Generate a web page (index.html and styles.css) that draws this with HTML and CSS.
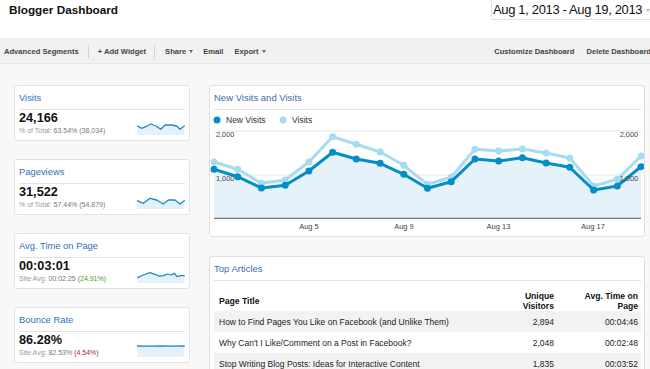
FILE: index.html
```html
<!DOCTYPE html>
<html>
<head>
<meta charset="utf-8">
<link rel="stylesheet" href="styles.css">
</head>
<body>
<div class="header">
  <div class="title">Blogger Dashboard</div>
  <div class="date">Aug 1, 2013 - Aug 19, 2013<span class="date-arrow"></span></div>
</div>
<div class="toolbar">
  <span class="tb-item">Advanced Segments</span>
  <span class="tb-sep sep1"></span>
  <span class="tb-item">+ Add Widget</span>
  <span class="tb-sep sep2"></span>
  <span class="tb-item">Share</span><span class="caret"></span>
  <span class="tb-item email">Email</span>
  <span class="tb-item export">Export</span><span class="caret"></span>
  <span class="tb-item right">Customize Dashboard</span>
  <span class="tb-item delete">Delete Dashboard</span>
</div>
<div class="main">
  <div class="left">
    <div class="card">
      <div class="card-title">Visits</div>
      <div class="card-body">
        <div class="card-info">
          <div class="value">24,166</div>
          <div class="sub">% of Total: <span class="subv">63.54% (38,034)</span></div>
        </div>
        <svg class="spark" width="48" height="15" viewBox="0 0 48 15">
          <polygon class="spark-fill" points="0.3,5 4.7,7.3 8.7,5.7 13.7,3 19,5 23.7,8.3 28,4 34.7,4 39.7,5 43,8.3 47.3,5 47.3,14 0.3,14"/>
          <polyline class="spark-line" points="0.3,5 4.7,7.3 8.7,5.7 13.7,3 19,5 23.7,8.3 28,4 34.7,4 39.7,5 43,8.3 47.3,5"/>
        </svg>
      </div>
    </div>
    <div class="card">
      <div class="card-title">Pageviews</div>
      <div class="card-body">
        <div class="card-info">
          <div class="value">31,522</div>
          <div class="sub">% of Total: <span class="subv">57.44% (54,879)</span></div>
        </div>
        <svg class="spark" width="48" height="15" viewBox="0 0 48 15">
          <polygon class="spark-fill" points="0.3,5.7 6.3,8.3 13,3.3 19.7,5 26.3,9 31.3,5 38,5 43,9 47.3,5.7 47.3,14 0.3,14"/>
          <polyline class="spark-line" points="0.3,5.7 6.3,8.3 13,3.3 19.7,5 26.3,9 31.3,5 38,5 43,9 47.3,5.7"/>
        </svg>
      </div>
    </div>
    <div class="card">
      <div class="card-title">Avg. Time on Page</div>
      <div class="card-body">
        <div class="card-info">
          <div class="value">00:03:01</div>
          <div class="sub">Site Avg: <span class="subv">00:02:25</span> <span class="good">(24.91%)</span></div>
        </div>
        <svg class="spark" width="48" height="15" viewBox="0 0 48 15">
          <polygon class="spark-fill" points="0.3,8.7 6.3,6 13,3.7 18,5.3 22.3,7 26.3,6.7 30.3,5 33.7,6 37.3,4.3 40.3,7.7 43.7,6.7 47.3,6.7 47.3,14 0.3,14"/>
          <polyline class="spark-line" points="0.3,8.7 6.3,6 13,3.7 18,5.3 22.3,7 26.3,6.7 30.3,5 33.7,6 37.3,4.3 40.3,7.7 43.7,6.7 47.3,6.7"/>
        </svg>
      </div>
    </div>
    <div class="card">
      <div class="card-title">Bounce Rate</div>
      <div class="card-body">
        <div class="card-info">
          <div class="value">86.28%</div>
          <div class="sub">Site Avg: <span class="subv">82.53%</span> <span class="bad">(4.54%)</span></div>
        </div>
        <svg class="spark" width="48" height="15" viewBox="0 0 48 15">
          <polygon class="spark-fill" points="0.3,3 47.3,3 47.3,14 0.3,14"/>
          <polyline class="spark-line" points="0.3,3 12,3.2 24,2.9 36,3.1 47.3,3"/>
        </svg>
      </div>
    </div>
  </div>
  <div class="right-col">
    <div class="panel">
      <div class="panel-title">New Visits and Visits</div>
      <svg class="chart" width="434" height="126" viewBox="0 0 434 126">
        <circle cx="7" cy="10" r="3.5" fill="#058dc7"/>
        <text x="16" y="13.3" class="legend">New Visits</text>
        <circle cx="73" cy="10" r="3.5" fill="#a6dcf2"/>
        <text x="82" y="13.3" class="legend">Visits</text>
        <line x1="4" y1="21" x2="431" y2="21" class="grid"/>
        <line x1="4" y1="65" x2="431" y2="65" class="grid"/>
        <polygon class="area" points="4,59.3 27.7,66.7 51.4,78 75.2,75.3 98.9,61 122.6,42.3 146.3,49 170.1,53.3 193.8,64.3 217.5,78.3 241.2,71.7 264.9,49 288.7,51 312.4,47.7 336.1,53 359.8,57.3 383.6,80 407.3,76 431,56.7 431,108 4,108"/>
        <line x1="4" y1="108.3" x2="431" y2="108.3" class="axis"/>
        <text x="6" y="27" class="ylab">2,000</text>
        <text x="6" y="71" class="ylab">1,000</text>
        <polyline class="line-light" points="4,52 27.7,59.3 51.4,73.3 75.2,70 98.9,52 122.6,26.7 146.3,34.3 170.1,42 193.8,55.3 217.5,74.3 241.2,67.3 264.9,39.3 288.7,41 312.4,39 336.1,43 359.8,48 383.6,76 407.3,69.3 431,46"/>
        <g fill="#a6dcf2">
          <circle cx="4" cy="52" r="3.5"/><circle cx="27.7" cy="59.3" r="3.5"/><circle cx="51.4" cy="73.3" r="3.5"/><circle cx="75.2" cy="70" r="3.5"/><circle cx="98.9" cy="52" r="3.5"/><circle cx="122.6" cy="26.7" r="3.5"/><circle cx="146.3" cy="34.3" r="3.5"/><circle cx="170.1" cy="42" r="3.5"/><circle cx="193.8" cy="55.3" r="3.5"/><circle cx="217.5" cy="74.3" r="3.5"/><circle cx="241.2" cy="67.3" r="3.5"/><circle cx="264.9" cy="39.3" r="3.5"/><circle cx="288.7" cy="41" r="3.5"/><circle cx="312.4" cy="39" r="3.5"/><circle cx="336.1" cy="43" r="3.5"/><circle cx="359.8" cy="48" r="3.5"/><circle cx="383.6" cy="76" r="3.5"/><circle cx="407.3" cy="69.3" r="3.5"/><circle cx="431" cy="46" r="3.5"/>
        </g>
        <polyline class="line-dark" points="4,59.3 27.7,66.7 51.4,78 75.2,75.3 98.9,61 122.6,42.3 146.3,49 170.1,53.3 193.8,64.3 217.5,78.3 241.2,71.7 264.9,49 288.7,51 312.4,47.7 336.1,53 359.8,57.3 383.6,80 407.3,76 431,56.7"/>
        <g fill="#058dc7">
          <circle cx="4" cy="59.3" r="3.5"/><circle cx="27.7" cy="66.7" r="3.5"/><circle cx="51.4" cy="78" r="3.5"/><circle cx="75.2" cy="75.3" r="3.5"/><circle cx="98.9" cy="61" r="3.5"/><circle cx="122.6" cy="42.3" r="3.5"/><circle cx="146.3" cy="49" r="3.5"/><circle cx="170.1" cy="53.3" r="3.5"/><circle cx="193.8" cy="64.3" r="3.5"/><circle cx="217.5" cy="78.3" r="3.5"/><circle cx="241.2" cy="71.7" r="3.5"/><circle cx="264.9" cy="49" r="3.5"/><circle cx="288.7" cy="51" r="3.5"/><circle cx="312.4" cy="47.7" r="3.5"/><circle cx="336.1" cy="53" r="3.5"/><circle cx="359.8" cy="57.3" r="3.5"/><circle cx="383.6" cy="80" r="3.5"/><circle cx="407.3" cy="76" r="3.5"/><circle cx="431" cy="56.7" r="3.5"/>
        </g>
        <text x="428" y="27" class="ylab" text-anchor="end">2,000</text>
        <text x="428" y="71" class="ylab" text-anchor="end">1,000</text>
        <text x="99" y="118.5" class="xlab" text-anchor="middle">Aug 5</text>
        <text x="194" y="118.5" class="xlab" text-anchor="middle">Aug 9</text>
        <text x="288.5" y="118.5" class="xlab" text-anchor="middle">Aug 13</text>
        <text x="383" y="118.5" class="xlab" text-anchor="middle">Aug 17</text>
      </svg>
    </div>
    <div class="panel articles">
      <div class="panel-title">Top Articles</div>
      <table class="tbl">
        <thead>
          <tr><th class="c-title">Page Title</th><th class="c-num c-uv">Unique<br>Visitors</th><th class="c-num c-at">Avg. Time on<br>Page</th></tr>
        </thead>
        <tbody>
          <tr class="odd"><td>How to Find Pages You Like on Facebook (and Unlike Them)</td><td class="c-num">2,894</td><td class="c-num">00:04:46</td></tr>
          <tr><td>Why Can't I Like/Comment on a Post in Facebook?</td><td class="c-num">2,048</td><td class="c-num">00:02:48</td></tr>
          <tr class="odd"><td>Stop Writing Blog Posts: Ideas for Interactive Content</td><td class="c-num">1,835</td><td class="c-num">00:03:52</td></tr>
        </tbody>
      </table>
    </div>
  </div>
</div>
</body>
</html>
```
FILE: styles.css
```css
html, body {
  margin: 0;
  padding: 0;
}
body {
  width: 650px;
  height: 369px;
  overflow: hidden;
  background: #f8f8f8;
  font-family: "Liberation Sans", Arial, sans-serif;
  color: #222;
}
.header {
  height: 38px;
  background: #fff;
  display: flex;
  align-items: flex-start;
  padding-left: 9px;
  box-sizing: border-box;
}
.title {
  font-size: 11.75px;
  font-weight: bold;
  line-height: 14px;
  margin-top: 2.6px;
  color: #111;
}
.date {
  margin-left: auto;
  margin-top: -1px;
  margin-right: -12px;
  flex-shrink: 0;
  border: 1px solid #e2e2e2;
  border-radius: 2px;
  padding: 2px 0 1px 1px;
  font-size: 13px;
  letter-spacing: -0.35px;
  line-height: 16px;
  color: #111;
  display: flex;
  align-items: center;
  width: 171px;
  box-sizing: border-box;
  background: #fff;
}
.date-arrow {
  margin-left: 4px;
  width: 0;
  height: 0;
  border-left: 2.5px solid transparent;
  border-right: 2.5px solid transparent;
  border-top: 3px solid #bbb;
}
.toolbar {
  height: 26px;
  box-sizing: border-box;
  background: #f1f1f1;
  border-top: 1px solid #ececec;
  border-bottom: 1px solid #e6e6e6;
  display: flex;
  align-items: center;
  padding-left: 4px;
  font-size: 7.6px;
  font-weight: bold;
  color: #444;
  white-space: nowrap;
}
.tb-sep {
  width: 1px;
  height: 13px;
  background: #d2d2d2;
}
.sep1 { margin: 0 9px 0 9px; }
.sep2 { margin: 0 10px 0 8px; }
.caret {
  margin-left: 3px;
  width: 0;
  height: 0;
  border-left: 2.5px solid transparent;
  border-right: 2.5px solid transparent;
  border-top: 3px solid #666;
}
.email { margin-left: 10px; }
.export { margin-left: 11px; }
.right { margin-left: auto; }
.delete { margin-left: 12px; margin-right: -1px; }
.main {
  display: flex;
  align-items: flex-start;
  gap: 19px;
  padding: 21px 0 0 14px;
  height: 305px;
  box-sizing: border-box;
  overflow: hidden;
}
.left {
  width: 176px;
  display: flex;
  flex-direction: column;
  gap: 18px;
}
.card {
  background: #fff;
  border: 1px solid #e3e3e3;
  border-radius: 3px;
  padding: 0 4px 4px 4px;
  height: 56px;
  box-sizing: border-box;
}
.card-title {
  font-size: 9.4px;
  line-height: 16px;
  padding: 4px 0 3px 0;
  color: #2f72b4;
  border-bottom: 1px solid #e2e2e2;
}
.card-body {
  display: flex;
  justify-content: space-between;
  align-items: flex-end;
}
.value {
  font-size: 12.7px;
  font-weight: bold;
  line-height: 16px;
  color: #111;
}
.sub {
  font-size: 7px;
  line-height: 10px;
  color: #9a9a9a;
  white-space: nowrap;
}
.subv { color: #777; }
.good { color: #4f9a2a; }
.bad { color: #b3262b; }
.spark { display: block; }
.spark-fill { fill: #e4f1fa; }
.spark-line {
  fill: none;
  stroke: #1e88cf;
  stroke-width: 1.3;
  stroke-linejoin: round;
  stroke-linecap: round;
}
.right-col {
  width: 436px;
  display: flex;
  flex-direction: column;
  gap: 19px;
}
.panel {
  background: #fff;
  border: 1px solid #e0e0e0;
  border-radius: 3px;
}
.panel-title {
  margin: 0 3px 0 4px;
  font-size: 9.5px;
  line-height: 16px;
  padding: 4px 0 3px 0;
  color: #3d6ca6;
  border-bottom: 1px solid #e2e2e2;
}
.chart {
  display: block;
  font-family: "Liberation Sans", Arial, sans-serif;
}
.legend { font-size: 8.5px; fill: #333; }
.grid { stroke: #e6e6e6; stroke-width: 1; }
.axis { stroke: #555; stroke-width: 1; }
.area { fill: #e6f2fa; }
.line-light {
  fill: none;
  stroke: #a6dcf2;
  stroke-width: 3;
  stroke-linejoin: round;
}
.line-dark {
  fill: none;
  stroke: #058dc7;
  stroke-width: 3;
  stroke-linejoin: round;
}
.ylab { font-size: 7.3px; fill: #444; }
.xlab { font-size: 7.5px; fill: #444; }
.articles { height: 130px; }
.tbl {
  margin: 9px 3px 0 4px;
  width: 427px;
  border-collapse: collapse;
  font-size: 8.5px;
  color: #222;
}
.tbl th {
  font-weight: bold;
  line-height: 10px;
  padding: 1px 3px 0 5px;
  vertical-align: middle;
  color: #111;
  font-size: 8.6px;
}
.c-title { text-align: left; }
.tbl td {
  height: 20px;
  padding: 1px 3px 0 5px;
  line-height: 19px;
  white-space: nowrap;
}
.c-num { text-align: right; }
.c-uv { width: 72px; }
.c-at { width: 76px; }
.tbl tr.odd td { background: #f2f2f2; }
```
